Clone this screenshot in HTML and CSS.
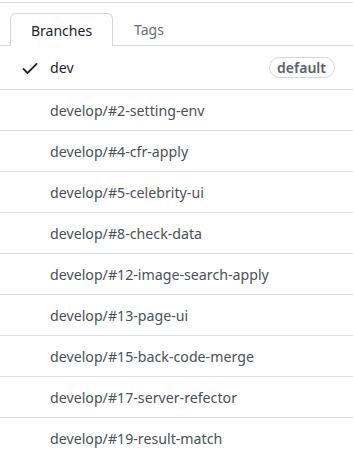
FILE: index.html
```html
<!DOCTYPE html>
<html>
<head>
<meta charset="utf-8">
<link rel="stylesheet" href="styles.css">
</head>
<body>
<div class="panel">
  <nav class="tabs">
    <div class="tab active">Branches</div>
    <div class="tab">Tags</div>
  </nav>
  <ul class="list">
    <li class="row current">
      <svg class="check" width="20" height="20" viewBox="0 0 16 16"><path fill="#1f2328" d="M13.78 4.22a.75.75 0 0 1 0 1.06l-7.25 7.25a.75.75 0 0 1-1.06 0L2.22 9.28a.751.751 0 0 1 .018-1.042.751.751 0 0 1 1.042-.018L6 10.94l6.72-6.72a.75.75 0 0 1 1.06 0Z"/></svg>
      <span class="name">dev</span>
      <span class="badge">default</span>
    </li>
    <li class="row"><span class="name">develop/#2-setting-env</span></li>
    <li class="row"><span class="name">develop/#4-cfr-apply</span></li>
    <li class="row"><span class="name">develop/#5-celebrity-ui</span></li>
    <li class="row"><span class="name">develop/#8-check-data</span></li>
    <li class="row"><span class="name">develop/#12-image-search-apply</span></li>
    <li class="row"><span class="name">develop/#13-page-ui</span></li>
    <li class="row"><span class="name">develop/#15-back-code-merge</span></li>
    <li class="row"><span class="name">develop/#17-server-refector</span></li>
    <li class="row"><span class="name">develop/#19-result-match</span></li>
  </ul>
</div>
</body>
</html>
```

FILE: styles.css
```css
html, body {
  margin: 0;
  padding: 0;
  background: #ffffff;
}
body {
  font-family: "Noto Sans", "Open Sans", sans-serif;
  font-size: 14px;
  color: #1f2328;
}
.panel {
  margin-top: 2px;
  border-top: 1px solid #d8dee4;
  width: 353px;
}
.tabs {
  display: flex;
  padding: 10px 10px 0;
  border-bottom: 1px solid #d0d7de;
}
.tab {
  height: 31px;
  padding: 0 20px;
  display: flex;
  align-items: center;
  border: 1px solid transparent;
  border-bottom: none;
  border-radius: 6px 6px 0 0;
  color: #656d76;
  margin-bottom: -1px;
  font-size: 14px;
}
.tab.active {
  border-color: #d0d7de;
  background: #ffffff;
  color: #1f2328;
  height: 32px;
}
.list {
  list-style: none;
  margin: 0;
  padding: 0;
}
.row {
  display: flex;
  align-items: center;
  height: 40px;
  padding: 0 18px 0 50px;
  border-bottom: 1px solid #d8dee4;
  color: #4a5058;
  font-size: 14.2px;
}
.row.current {
  height: 43px;
  padding-left: 20px;
  color: #1f2328;
}
.check {
  margin-right: 10px;
  flex: none;
}
.name {
  flex: 1;
}
.badge {
  border: 1px solid #d0d7de;
  border-radius: 2em;
  padding: 0 8px 0 7px;
  height: 19px;
  line-height: 19px;
  font-weight: 600;
  color: #57606a;
  font-size: 14px;
}
```
